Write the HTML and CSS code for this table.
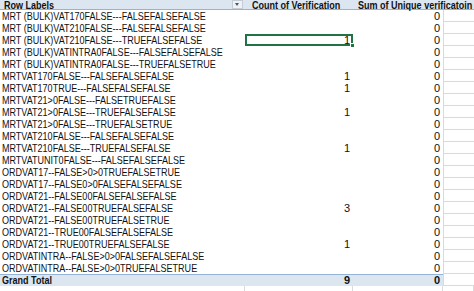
FILE: index.html
```html
<!DOCTYPE html>
<html>
<head>
<meta charset="utf-8">
<link rel="stylesheet" href="styles.css">
</head>
<body>
<table class="pivot">
  <colgroup>
    <col class="c-a"><col class="c-b"><col class="c-c"><col class="c-d">
  </colgroup>
  <thead>
    <tr class="hdr">
      <th class="lbl"><div class="hcell"><span class="t">Row Labels</span><span class="dd"></span></div></th>
      <th class="cnt-h"><span class="t">Count of Verification</span></th>
      <th class="sum-h"><span class="t">Sum of Unique verificatoin</span></th>
      <th class="grid-h"></th>
    </tr>
  </thead>
  <tbody>
    <tr><td class="lbl"><span class="t">MRT (BULK)VAT170FALSE---FALSEFALSEFALSE</span></td><td class="num"></td><td class="num">0</td><td class="grid"></td></tr>
    <tr><td class="lbl"><span class="t">MRT (BULK)VAT210FALSE---FALSEFALSEFALSE</span></td><td class="num"></td><td class="num">0</td><td class="grid"></td></tr>
    <tr><td class="lbl"><span class="t">MRT (BULK)VAT210FALSE---TRUEFALSEFALSE</span></td><td class="num sel">1<span class="handle"></span></td><td class="num">0</td><td class="grid"></td></tr>
    <tr><td class="lbl"><span class="t">MRT (BULK)VATINTRA0FALSE---FALSEFALSEFALSE</span></td><td class="num"></td><td class="num">0</td><td class="grid"></td></tr>
    <tr><td class="lbl"><span class="t">MRT (BULK)VATINTRA0FALSE---TRUEFALSETRUE</span></td><td class="num"></td><td class="num">0</td><td class="grid"></td></tr>
    <tr><td class="lbl"><span class="t">MRTVAT170FALSE---FALSEFALSEFALSE</span></td><td class="num">1</td><td class="num">0</td><td class="grid"></td></tr>
    <tr><td class="lbl"><span class="t">MRTVAT170TRUE---FALSEFALSEFALSE</span></td><td class="num">1</td><td class="num">0</td><td class="grid"></td></tr>
    <tr><td class="lbl"><span class="t">MRTVAT21&gt;0FALSE---FALSETRUEFALSE</span></td><td class="num"></td><td class="num">0</td><td class="grid"></td></tr>
    <tr><td class="lbl"><span class="t">MRTVAT21&gt;0FALSE---TRUEFALSEFALSE</span></td><td class="num">1</td><td class="num">0</td><td class="grid"></td></tr>
    <tr><td class="lbl"><span class="t">MRTVAT21&gt;0FALSE---TRUEFALSETRUE</span></td><td class="num"></td><td class="num">0</td><td class="grid"></td></tr>
    <tr><td class="lbl"><span class="t">MRTVAT210FALSE---FALSEFALSEFALSE</span></td><td class="num"></td><td class="num">0</td><td class="grid"></td></tr>
    <tr><td class="lbl"><span class="t">MRTVAT210FALSE---TRUEFALSEFALSE</span></td><td class="num">1</td><td class="num">0</td><td class="grid"></td></tr>
    <tr><td class="lbl"><span class="t">MRTVATUNIT0FALSE---FALSEFALSEFALSE</span></td><td class="num"></td><td class="num">0</td><td class="grid"></td></tr>
    <tr><td class="lbl"><span class="t">ORDVAT17--FALSE&gt;0&gt;0TRUEFALSETRUE</span></td><td class="num"></td><td class="num">0</td><td class="grid"></td></tr>
    <tr><td class="lbl"><span class="t">ORDVAT17--FALSE0&gt;0FALSEFALSEFALSE</span></td><td class="num"></td><td class="num">0</td><td class="grid"></td></tr>
    <tr><td class="lbl"><span class="t">ORDVAT21--FALSE00FALSEFALSEFALSE</span></td><td class="num"></td><td class="num">0</td><td class="grid"></td></tr>
    <tr><td class="lbl"><span class="t">ORDVAT21--FALSE00TRUEFALSEFALSE</span></td><td class="num">3</td><td class="num">0</td><td class="grid"></td></tr>
    <tr><td class="lbl"><span class="t">ORDVAT21--FALSE00TRUEFALSETRUE</span></td><td class="num"></td><td class="num">0</td><td class="grid"></td></tr>
    <tr><td class="lbl"><span class="t">ORDVAT21--TRUE00FALSEFALSEFALSE</span></td><td class="num"></td><td class="num">0</td><td class="grid"></td></tr>
    <tr><td class="lbl"><span class="t">ORDVAT21--TRUE00TRUEFALSEFALSE</span></td><td class="num">1</td><td class="num">0</td><td class="grid"></td></tr>
    <tr><td class="lbl"><span class="t">ORDVATINTRA--FALSE&gt;0&gt;0FALSEFALSEFALSE</span></td><td class="num"></td><td class="num">0</td><td class="grid"></td></tr>
    <tr><td class="lbl"><span class="t">ORDVATINTRA--FALSE&gt;0&gt;0TRUEFALSETRUE</span></td><td class="num"></td><td class="num">0</td><td class="grid"></td></tr>
    <tr class="total"><td class="lbl"><span class="t">Grand Total</span></td><td class="num">9</td><td class="num">0</td><td class="grid"></td></tr>
    <tr class="empty"><td class="e"></td><td class="e"></td><td class="e"></td><td class="e"></td></tr>
  </tbody>
</table>
</body>
</html>
```
FILE: styles.css
```css
html, body {
  margin: 0;
  padding: 0;
  background: #ffffff;
  overflow: hidden;
}
.pivot {
  border-collapse: collapse;
  border-spacing: 0;
  table-layout: fixed;
  width: 474px;
  font-family: "Liberation Sans", Arial, sans-serif;
  font-size: 11px;
  color: #111;
}
.c-a { width: 245px; }
.c-b { width: 108px; }
.c-c { width: 90px; }
.c-d { width: 31px; }

.pivot tr { height: 12px; }
.pivot td, .pivot th {
  padding: 0;
  border: 0;
  height: 12px;
  line-height: 12px;
  white-space: nowrap;
  overflow: hidden;
  vertical-align: middle;
}
.t {
  display: inline-block;
  transform: scaleX(0.82);
  transform-origin: left center;
  line-height: 12px;
}
.pivot tr.hdr { height: 10px; }
.hdr th {
  height: 10px;
  line-height: 10px;
  background: #dce6f1;
  box-shadow: inset 0 -1px 0 #95b3d7;
  font-weight: bold;
  text-align: left;
  color: #111;
  overflow: visible;
  vertical-align: top;
}
.hdr .t {
  line-height: 10px;
}
.hcell {
  display: flex;
  justify-content: space-between;
  align-items: flex-start;
  padding-left: 2px;
  height: 10px;
}
.dd {
  position: relative;
  width: 11px;
  height: 9px;
  margin-right: 2px;
  background: #eef1f5;
  border: 1px solid #c5ccd6;
  box-sizing: border-box;
}
.dd::after {
  content: "";
  position: absolute;
  left: 2px;
  top: 2px;
  border-left: 2.5px solid transparent;
  border-right: 2.5px solid transparent;
  border-top: 3px solid #555;
}
.cnt-h { padding-left: 7px !important; }
.sum-h { padding-left: 5px !important; }
.lbl { padding-left: 2px !important; }
.num {
  text-align: right;
  padding-right: 3px !important;
}
.grid {
  background:
    linear-gradient(#dadada, #dadada) left top / 1px 100% no-repeat,
    linear-gradient(#dadada, #dadada) left bottom / 100% 1px no-repeat;
}
.sel {
  position: relative;
  box-shadow: inset 0 0 0 2px #217346;
  padding-right: 3px !important;
  overflow: visible !important;
}
.handle {
  position: absolute;
  right: -2px;
  bottom: -2px;
  width: 3px;
  height: 3px;
  background: #217346;
  border: 1px solid #fff;
}
.total td.lbl, .total td.num {
  background: #dce6f1;
  box-shadow: inset 0 1px 0 #95b3d7;
  font-weight: bold;
}
.empty td {
  height: 10px;
  box-shadow: inset -1px 0 0 #dadada;
}
```
